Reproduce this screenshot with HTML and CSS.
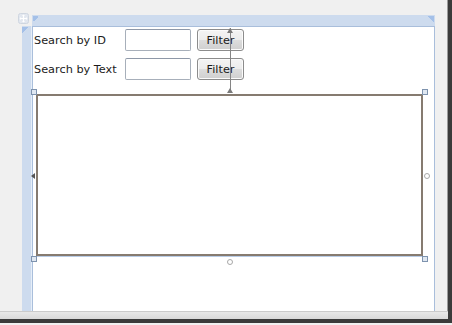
FILE: index.html
```html
<!DOCTYPE html>
<html lang="en">
<head>
    <meta charset="UTF-8">
    <title>Search Designer</title>
    <link rel="stylesheet" href="styles.css">
</head>
<body>
    <div class="frame">
        <div class="designer">
            <!-- move adorner -->
            <svg class="move-handle" width="11" height="11" viewBox="0 0 11 11">
                <rect x="0.5" y="0.5" width="10" height="10" rx="2" fill="#e2e7ef" stroke="#cfd6e0"/>
                <path d="M5.5 2 L5.5 9 M2 5.5 L9 5.5" stroke="#ffffff" stroke-width="1.2"/>
                <path d="M5.5 1.5 L4 3 L7 3 Z M5.5 9.5 L4 8 L7 8 Z M1.5 5.5 L3 4 L3 7 Z M9.5 5.5 L8 4 L8 7 Z" fill="#ffffff"/>
            </svg>
            <div class="corner"></div>
            <div class="ruler ruler-top"></div>
            <div class="ruler ruler-left"></div>
            <div class="surface">
                <div class="search-form">
                    <label class="search-label">Search by ID</label>
                    <input class="search-box" type="text">
                    <button class="filter-btn">Filter</button>
                    <label class="search-label">Search by Text</label>
                    <input class="search-box" type="text">
                    <button class="filter-btn">Filter</button>
                </div>
                <div class="results">
                    <span class="margin-arrow"></span>
                    <span class="handle handle-tl"></span>
                    <span class="handle handle-tr"></span>
                    <span class="handle handle-bl"></span>
                    <span class="handle handle-br"></span>
                    <span class="edge-arrow"></span>
                    <span class="edge-dot edge-dot-right"></span>
                    <span class="edge-dot edge-dot-bottom"></span>
                </div>
            </div>
        </div>
        <div class="bottom-band"></div>
    </div>
</body>
</html>
```

FILE: styles.css
```css
* {
    margin: 0;
    padding: 0;
    box-sizing: border-box;
}

body {
    background: #f0f0f0;
    font-family: "DejaVu Sans", Verdana, sans-serif;
    font-size: 11.3px;
    color: #1b1b1b;
    overflow: hidden;
}

/* Window frame */
.frame {
    width: 452px;
    height: 323px;
    display: flex;
    flex-direction: column;
    background: #f0f0f0;
    border-right: 4px solid #3b3b3b;
    border-bottom: 4px solid #3b3b3b;
    box-shadow: inset -1px -1px 0 #9c9c9c;
}

.designer {
    position: relative;
    margin: 15px 0 0 22px;
    display: grid;
    grid-template-columns: 10px 403px;
    grid-template-rows: 11px 285px;
}

.move-handle {
    position: absolute;
    top: -2px;
    left: -4px;
}

/* Rulers */
.ruler {
    background: #cddbee;
}

.ruler-top {
    background:
        linear-gradient(135deg, #a4c0e8 50%, transparent 50%) left 1px top 1px / 6px 6px no-repeat,
        linear-gradient(225deg, #a4c0e8 50%, transparent 50%) right 1px top 1px / 6px 6px no-repeat,
        #cddbee;
}

.ruler-left {
    border-right: 1px solid #e6eef8;
    background:
        linear-gradient(135deg, #a4c0e8 50%, transparent 50%) left 0 top 1px / 6px 6px no-repeat,
        #cddbee;
}

/* Design surface */
.surface {
    background: #fff;
    border: 1px solid #a9bedb;
    border-bottom: 0;
}

.search-form {
    display: grid;
    grid-template-columns: 85px 66px 47px;
    grid-auto-rows: 22px;
    gap: 7px 6px;
    padding: 2px 0 0 1px;
    align-items: center;
}

.search-label {
    white-space: nowrap;
}

.search-box {
    height: 22px;
    border: 1px solid #a7afba;
    border-top-color: #8e98a8;
    border-radius: 2px;
    background: #fff;
    outline: none;
}

.filter-btn {
    height: 22px;
    font: inherit;
    color: #1a1a1a;
    border: 1px solid #8c8c8c;
    border-radius: 3px;
    background: linear-gradient(#f4f4f4 0%, #ececec 50%, #dddddd 50%, #cfcfcf 100%);
    box-shadow: inset 0 0 0 1px #fbfbfb;
}

/* Selected results grid */
.results {
    position: relative;
    margin: 14px 0 0 3px;
    width: 387px;
    height: 162px;
    border: 2px solid #867b70;
    box-shadow: 0 1px 0 #b9cce6;
}

.handle {
    position: absolute;
    width: 6px;
    height: 6px;
    border: 1px solid #7e93ae;
    background: #dfe7f1;
}

.handle-tl { left: -7px; top: -7px; }
.handle-tr { left: 384px; top: -7px; }
.handle-bl { left: -7px; top: 160px; }
.handle-br { left: 384px; top: 160px; }

.margin-arrow {
    position: absolute;
    left: 192px;
    top: -68px;
    width: 1px;
    height: 65px;
    background: #858585;
}

.margin-arrow::before,
.margin-arrow::after {
    content: "";
    position: absolute;
    left: -3px;
    border-left: 3.5px solid transparent;
    border-right: 3.5px solid transparent;
    border-bottom: 5px solid #7a7a7a;
}

.margin-arrow::before { top: 0; }
.margin-arrow::after { bottom: 0; }

.edge-arrow {
    position: absolute;
    left: -7px;
    top: 77px;
    border-top: 3.5px solid transparent;
    border-bottom: 3.5px solid transparent;
    border-right: 4px solid #555;
}

.edge-dot {
    position: absolute;
    width: 6px;
    height: 6px;
    border: 1px solid #a8a8a8;
    border-radius: 50%;
    background: #fff;
}

.edge-dot-right { left: 386px; top: 77px; }
.edge-dot-bottom { left: 189px; top: 163px; }

.bottom-band {
    flex: 1;
    border-top: 1px solid #cbcbcb;
    background: linear-gradient(#e8e8e8, #d9d9d9);
}
```
